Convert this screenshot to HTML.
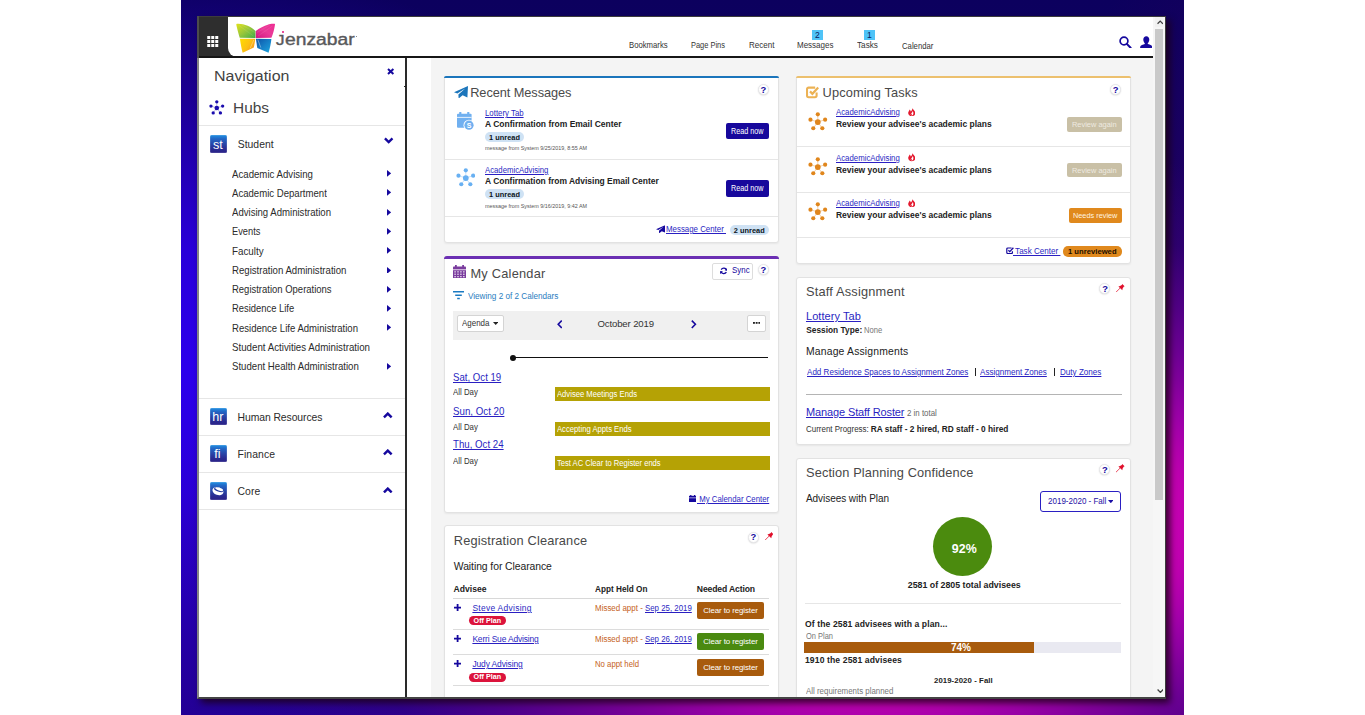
<!DOCTYPE html><html lang="en"><head><meta charset="utf-8"><title>Jenzabar - Home</title><style>
html,body{margin:0;padding:0}
body{width:1365px;height:715px;overflow:hidden;background:#fff;position:relative;font-family:"Liberation Sans",Arial,sans-serif;color:#333}
div,span,a,svg.a,h1,h2,h3,h4,p,ul,li,button,header,nav,aside,main,section{position:absolute;margin:0;padding:0;box-sizing:border-box;display:block;font-weight:400}
button{border:0;background:none;font-family:inherit}
.t{white-space:pre}
a{color:#2a1fc2}
.card{background:#fff;border:1px solid #e2e2e2;border-radius:3px;box-shadow:0 1px 2px rgba(0,0,0,.06)}
.sep{background:#e6e6e6;height:1px}
.q{width:11px;height:11px;border-radius:50%;border:1px solid #e6e6e9;background:#fff;box-shadow:0 .5px 1.5px rgba(0,0,0,.14)}
</style></head><body>
<div class="desk" style="left:181px;top:0px;width:1003px;height:715px;background:radial-gradient(ellipse 425px 242px at 692px 523px, #d000b6 0%, #d000b6 66%, #c000b0 74%, #a000aa 83%, #80009c 93%, #6c0094 101%, rgba(94,0,142,.78) 114%, rgba(70,0,130,.35) 135%, rgba(60,0,120,0) 165%),radial-gradient(ellipse 560px 400px at 0px 370px, rgba(44,0,236,1) 0%, rgba(43,0,226,.92) 30%, rgba(42,0,196,.5) 68%, rgba(42,0,180,0) 100%),linear-gradient(125deg, rgba(70,0,70,0) 62%, rgba(76,0,84,.4) 86%),linear-gradient(180deg, #0c005e 0%, #100066 25%, #1a0078 60%, #220088 100%);">
</div>
<div class="win" style="left:197px;top:16px;width:969px;height:683px;background:#fff;border:1px solid #3c3c3c;border-left:2px solid #858585;border-bottom:2px solid #444;box-shadow:4px 4px 7px 0 rgba(28,0,22,.85);overflow:hidden">
<header style="left:0px;top:0px;width:966px;height:41px;background:#fff">
<div style="left:0px;top:0px;width:42px;height:40px;background:#2e2e2e">
</div>
<div style="left:28.5px;top:0px;width:40px;height:39.5px;background:#fff;border-bottom-left-radius:9px">
</div>
<div style="left:0px;top:39px;width:966px;height:1.7px;background:#161616">
</div>
<svg class="a" style="left:8px;top:18.7px;" width="11.5" height="11" viewBox="0 0 11 11"><rect x="0" y="0" width="3" height="3" fill="#fff"/><rect x="0" y="4" width="3" height="3" fill="#fff"/><rect x="0" y="8" width="3" height="3" fill="#fff"/><rect x="4" y="0" width="3" height="3" fill="#fff"/><rect x="4" y="4" width="3" height="3" fill="#fff"/><rect x="4" y="8" width="3" height="3" fill="#fff"/><rect x="8" y="0" width="3" height="3" fill="#fff"/><rect x="8" y="4" width="3" height="3" fill="#fff"/><rect x="8" y="8" width="3" height="3" fill="#fff"/></svg>
<svg class="a" style="left:37px;top:6.1px;" width="39.8" height="30" viewBox="0 0 39.8 30"><defs><linearGradient id="lg1" x1="0" y1="0" x2="1" y2="1"><stop offset="0" stop-color="#e0e21c"/><stop offset=".5" stop-color="#98c63a"/><stop offset="1" stop-color="#3dac48"/></linearGradient><linearGradient id="lg2" x1="1" y1="0" x2="0" y2="1"><stop offset="0" stop-color="#ee2c92"/><stop offset=".5" stop-color="#e93a98"/><stop offset="1" stop-color="#d21680"/></linearGradient><linearGradient id="lg3" x1="0" y1="0" x2="1" y2=".6"><stop offset="0" stop-color="#ffdc00"/><stop offset=".6" stop-color="#fcc012"/><stop offset="1" stop-color="#f6981e"/></linearGradient><linearGradient id="lg4" x1="0" y1="0" x2="1" y2="1"><stop offset="0" stop-color="#0c52a6"/><stop offset=".5" stop-color="#167ec6"/><stop offset="1" stop-color="#1ca6de"/></linearGradient></defs><path d="M0.9 0.8 C4 0.4 8 1.3 11.7 2.7 C14.5 3.8 17.5 5.8 19.5 8 L19.5 15 L3.7 14.8 C2.6 11 1.2 6 0.4 2.2 C0.2 1.4 0.4 0.9 0.9 0.8Z" fill="url(#lg1)"/><path d="M38.6 0.8 C36 0.5 33.5 1.1 31.8 1.7 C28.5 2.7 23 5 19.8 8 L19.8 15 L35.4 14.8 C36.4 12.4 37.4 9.4 37.9 7.2 C38.4 5 38.9 2.6 39 1.4 C39.1 1 38.9 0.8 38.6 0.8Z" fill="url(#lg2)"/><path d="M3.9 15.7 L19.3 15.7 C19 18 18.4 21.5 17.8 24.6 L6.7 29.8 C5.8 27 4.6 20.5 3.9 15.7Z" fill="url(#lg3)"/><path d="M20 15.7 L35.4 16 C35 19.5 34 25 32.6 29.8 L21.3 25 C20.8 22 20.3 18.5 20 15.7Z" fill="url(#lg4)"/><path d="M21.8 16.6 L24.8 24.6" stroke="rgba(255,255,255,.55)" stroke-width=".7" fill="none"/><path d="M17.8 17 L14.2 25.2" stroke="rgba(255,255,255,.45)" stroke-width=".7" fill="none"/><path d="M3 2.5 L17.5 13 M6 2 L19 9.5 M22 13 L36.5 3 M21 9.5 L34 2" stroke="rgba(255,255,255,.16)" stroke-width=".6" fill="none"/></svg>
<span class="t brand" style="left:77.2px;top:12px;font-size:17.2px;line-height:20px;color:#58585a;-webkit-text-stroke:.4px #58585a;transform:scaleX(1.121);transform-origin:0 0"><span style="position:static;display:inline;font-size:15.2px;line-height:0;letter-spacing:.45px">J</span>enzabar</span>
<div style="left:82.8px;top:13.8px;width:2.5px;height:2.5px;background:#e0157a;border-radius:50%">
</div>
<div style="left:156.6px;top:18.6px;width:1px;height:1px;background:#888">
</div>
<nav style="left:401px;top:3px;width:360px;height:36px;">
<span class="t" style="left:28.7px;top:20px;font-size:8.56px;line-height:10px;color:#333;transform:scaleX(0.9029);transform-origin:0 0;">Bookmarks</span>
<span class="t" style="left:91px;top:20px;font-size:8.56px;line-height:10px;color:#333;transform:scaleX(0.8725);transform-origin:0 0;">Page Pins</span>
<span class="t" style="left:149px;top:20px;font-size:8.56px;line-height:10px;color:#333;transform:scaleX(0.9375);transform-origin:0 0;">Recent</span>
<span class="t" style="left:197.3px;top:20px;font-size:8.56px;line-height:10px;color:#333;transform:scaleX(0.9341);transform-origin:0 0;">Messages</span>
<span class="t" style="left:257.3px;top:20px;font-size:8.56px;line-height:10px;color:#333;transform:scaleX(0.9561);transform-origin:0 0;">Tasks</span>
<span class="t" style="left:301.9px;top:21px;font-size:8.56px;line-height:10px;color:#333;transform:scaleX(0.9052);transform-origin:0 0;">Calendar</span>
<div style="left:211.7px;top:9.6px;width:11.3px;height:10.4px;background:#4fc3f7">
<span class="t" style="left:3.4px;top:0.4px;font-size:8.56px;line-height:10px;color:#0a1a5c;">2</span>
</div>
<div style="left:263.5px;top:9.6px;width:11.3px;height:10.4px;background:#4fc3f7">
<span class="t" style="left:3.4px;top:0.4px;font-size:8.56px;line-height:10px;color:#0a1a5c;">1</span>
</div>
</nav>
<svg class="a" style="left:920.3px;top:18.6px;" width="12.4" height="12.6" viewBox="0 0 12.4 12.6"><circle cx="5" cy="5" r="3.9" fill="none" stroke="#15089e" stroke-width="1.7"/><path d="M7.8 7.9 L11.6 11.8" stroke="#15089e" stroke-width="2" stroke-linecap="round"/></svg>
<svg class="a" style="left:940.6px;top:18.6px;" width="12.6" height="12.4" viewBox="0 0 12.6 12.4"><path d="M6.3 0.2c1.8 0 3 1.5 3 3.4 0 1.5-.6 2.9-1.5 3.6v.9c1.6.5 4.4 1.5 4.6 2.6l.1 1.6H.1l.1-1.6c.2-1.1 3-2.1 4.6-2.6v-.9c-.9-.7-1.5-2.1-1.5-3.6 0-1.9 1.2-3.4 3-3.4z" fill="#15089e"/></svg>
</header>
<aside style="left:0px;top:41px;width:208px;height:640px;background:#fff;border-right:2px solid #2a2a2a">
<span class="t" style="left:15.3px;top:9px;font-size:15.2px;line-height:17px;color:#424242;transform:scaleX(1.0506);transform-origin:0 0;">Navigation</span>
<svg class="a" style="left:188.2px;top:10.2px;" width="7.4" height="7" viewBox="0 0 7.4 7"><path d="M1 1 L6.4 6 M6.4 1 L1 6" stroke="#15089e" stroke-width="2"/></svg>
<svg class="a" style="left:10.4px;top:42px;" width="15.6" height="15.6" viewBox="0 0 16 16"><path d="M8.00 8.20 L8.00 1.90" stroke="#1a0cae" stroke-width=".45" opacity=".65"/><path d="M8.00 8.20 L13.99 6.25" stroke="#1a0cae" stroke-width=".45" opacity=".65"/><path d="M8.00 8.20 L11.70 13.30" stroke="#1a0cae" stroke-width=".45" opacity=".65"/><path d="M8.00 8.20 L4.30 13.30" stroke="#1a0cae" stroke-width=".45" opacity=".65"/><path d="M8.00 8.20 L2.01 6.25" stroke="#1a0cae" stroke-width=".45" opacity=".65"/><circle cx="8.00" cy="1.90" r="1.7" fill="#1a0cae"/><circle cx="13.99" cy="6.25" r="1.7" fill="#1a0cae"/><circle cx="11.70" cy="13.30" r="1.7" fill="#1a0cae"/><circle cx="4.30" cy="13.30" r="1.7" fill="#1a0cae"/><circle cx="2.01" cy="6.25" r="1.7" fill="#1a0cae"/><circle cx="8.00" cy="8.20" r="2.35" fill="#1a0cae"/></svg>
<span class="t" style="left:33.6px;top:42px;font-size:14.6px;line-height:16px;color:#444;transform:scaleX(1.0564);transform-origin:0 0;">Hubs</span>
<div class="sep" style="left:0px;top:67px;width:206px;height:1px;">
</div>
<div style="left:205px;top:27.6px;width:2px;height:1.6px;background:#222">
</div>
<div style="left:10.8px;top:77.2px;width:17.6px;height:17.6px;background:linear-gradient(180deg,#2191e2 0%,#2268c6 20%,#2848aa 48%,#2a2a90 80%,#2a2288 100%);border-radius:1.5px;box-shadow:inset 0 0 0 .5px rgba(255,255,255,.25)">
<span class="t" style="left:3.2px;top:2.8px;font-size:12.6px;line-height:14px;color:#fff;">st</span>
</div>
<span class="t" style="left:38.7px;top:81px;font-size:10.4px;line-height:11px;color:#2b2b2b;letter-spacing:0.0246px;">Student</span>
<svg class="a" style="left:185.4px;top:79.4px;" width="9.4" height="6.6" viewBox="0 0 10 7"><path d="M1 1.4 L5 5.4 L9 1.4" fill="none" stroke="#15089e" stroke-width="2.5" stroke-linejoin="miter"/></svg>
<ul style="left:0px;top:106px;width:206px;height:214px;list-style:none">
<li style="left:0px;top:0px;width:206px;height:19.27px;">
<span class="t" style="left:33.4px;top:5px;font-size:10.4px;line-height:11px;color:#2b2b2b;transform:scaleX(0.9287);transform-origin:0 0;">Academic Advising</span>
<svg class="a" style="left:187.8px;top:6.2px;" width="4.2" height="6.8" viewBox="0 0 4.2 6.8"><path d="M0 0 L4.2 3.4 L0 6.8Z" fill="#15089e"/></svg>
</li>
<li style="left:0px;top:19.27px;width:206px;height:19.27px;">
<span class="t" style="left:33.4px;top:4.73px;font-size:10.4px;line-height:11px;color:#2b2b2b;transform:scaleX(0.9222);transform-origin:0 0;">Academic Department</span>
<svg class="a" style="left:187.8px;top:6.2px;" width="4.2" height="6.8" viewBox="0 0 4.2 6.8"><path d="M0 0 L4.2 3.4 L0 6.8Z" fill="#15089e"/></svg>
</li>
<li style="left:0px;top:38.54px;width:206px;height:19.27px;">
<span class="t" style="left:33.4px;top:4.46px;font-size:10.4px;line-height:11px;color:#2b2b2b;transform:scaleX(0.9216);transform-origin:0 0;">Advising Administration</span>
<svg class="a" style="left:187.8px;top:6.2px;" width="4.2" height="6.8" viewBox="0 0 4.2 6.8"><path d="M0 0 L4.2 3.4 L0 6.8Z" fill="#15089e"/></svg>
</li>
<li style="left:0px;top:57.81px;width:206px;height:19.27px;">
<span class="t" style="left:33.4px;top:4.19px;font-size:10.4px;line-height:11px;color:#2b2b2b;transform:scaleX(0.894);transform-origin:0 0;">Events</span>
<svg class="a" style="left:187.8px;top:6.2px;" width="4.2" height="6.8" viewBox="0 0 4.2 6.8"><path d="M0 0 L4.2 3.4 L0 6.8Z" fill="#15089e"/></svg>
</li>
<li style="left:0px;top:77.08px;width:206px;height:19.27px;">
<span class="t" style="left:33.4px;top:4.92px;font-size:10.4px;line-height:11px;color:#2b2b2b;transform:scaleX(0.9433);transform-origin:0 0;">Faculty</span>
<svg class="a" style="left:187.8px;top:6.2px;" width="4.2" height="6.8" viewBox="0 0 4.2 6.8"><path d="M0 0 L4.2 3.4 L0 6.8Z" fill="#15089e"/></svg>
</li>
<li style="left:0px;top:96.35px;width:206px;height:19.27px;">
<span class="t" style="left:33.4px;top:4.65px;font-size:10.4px;line-height:11px;color:#2b2b2b;transform:scaleX(0.9256);transform-origin:0 0;">Registration Administration</span>
<svg class="a" style="left:187.8px;top:6.2px;" width="4.2" height="6.8" viewBox="0 0 4.2 6.8"><path d="M0 0 L4.2 3.4 L0 6.8Z" fill="#15089e"/></svg>
</li>
<li style="left:0px;top:115.62px;width:206px;height:19.27px;">
<span class="t" style="left:33.4px;top:4.38px;font-size:10.4px;line-height:11px;color:#2b2b2b;transform:scaleX(0.9123);transform-origin:0 0;">Registration Operations</span>
<svg class="a" style="left:187.8px;top:6.2px;" width="4.2" height="6.8" viewBox="0 0 4.2 6.8"><path d="M0 0 L4.2 3.4 L0 6.8Z" fill="#15089e"/></svg>
</li>
<li style="left:0px;top:134.89px;width:206px;height:19.27px;">
<span class="t" style="left:33.4px;top:4.11px;font-size:10.4px;line-height:11px;color:#2b2b2b;transform:scaleX(0.9047);transform-origin:0 0;">Residence Life</span>
<svg class="a" style="left:187.8px;top:6.2px;" width="4.2" height="6.8" viewBox="0 0 4.2 6.8"><path d="M0 0 L4.2 3.4 L0 6.8Z" fill="#15089e"/></svg>
</li>
<li style="left:0px;top:154.16px;width:206px;height:19.27px;">
<span class="t" style="left:33.4px;top:4.84px;font-size:10.4px;line-height:11px;color:#2b2b2b;transform:scaleX(0.9204);transform-origin:0 0;">Residence Life Administration</span>
<svg class="a" style="left:187.8px;top:6.2px;" width="4.2" height="6.8" viewBox="0 0 4.2 6.8"><path d="M0 0 L4.2 3.4 L0 6.8Z" fill="#15089e"/></svg>
</li>
<li style="left:0px;top:173.43px;width:206px;height:19.27px;">
<span class="t" style="left:33.4px;top:4.57px;font-size:10.4px;line-height:11px;color:#2b2b2b;transform:scaleX(0.937);transform-origin:0 0;">Student Activities Administration</span>
</li>
<li style="left:0px;top:192.7px;width:206px;height:19.27px;">
<span class="t" style="left:33.4px;top:4.3px;font-size:10.4px;line-height:11px;color:#2b2b2b;transform:scaleX(0.9263);transform-origin:0 0;">Student Health Administration</span>
<svg class="a" style="left:187.8px;top:6.2px;" width="4.2" height="6.8" viewBox="0 0 4.2 6.8"><path d="M0 0 L4.2 3.4 L0 6.8Z" fill="#15089e"/></svg>
</li>
</ul>
<div class="sep" style="left:0px;top:339.5px;width:206px;height:1px;">
</div>
<div style="left:10.6px;top:349.5px;width:17.6px;height:17.6px;background:linear-gradient(180deg,#2191e2 0%,#2268c6 20%,#2848aa 48%,#2a2a90 80%,#2a2288 100%);border-radius:1.5px;box-shadow:inset 0 0 0 .5px rgba(255,255,255,.25)">
<span class="t" style="left:2.7px;top:2.5px;font-size:12.6px;line-height:14px;color:#fff;">hr</span>
</div>
<span class="t" style="left:38.6px;top:354px;font-size:10.4px;line-height:11px;color:#2b2b2b;letter-spacing:-0.0908px;">Human Resources</span>
<svg class="a" style="left:184.2px;top:354.1px;" width="9.6" height="6.8" viewBox="0 0 10 7"><path d="M1 5.6 L5 1.6 L9 5.6" fill="none" stroke="#15089e" stroke-width="2.5" stroke-linejoin="miter"/></svg>
<div class="sep" style="left:0px;top:376.8px;width:206px;height:1px;">
</div>
<div style="left:10.6px;top:386.8px;width:17.6px;height:17.6px;background:linear-gradient(180deg,#2191e2 0%,#2268c6 20%,#2848aa 48%,#2a2a90 80%,#2a2288 100%);border-radius:1.5px;box-shadow:inset 0 0 0 .5px rgba(255,255,255,.25)">
<span class="t" style="left:4.6px;top:2.2px;font-size:12.6px;line-height:14px;color:#fff;">fi</span>
</div>
<span class="t" style="left:38.6px;top:391px;font-size:10.4px;line-height:11px;color:#2b2b2b;letter-spacing:0.0616px;">Finance</span>
<svg class="a" style="left:184.2px;top:391.4px;" width="9.6" height="6.8" viewBox="0 0 10 7"><path d="M1 5.6 L5 1.6 L9 5.6" fill="none" stroke="#15089e" stroke-width="2.5" stroke-linejoin="miter"/></svg>
<div class="sep" style="left:0px;top:414.1px;width:206px;height:1px;">
</div>
<div style="left:10.6px;top:424.1px;width:17.6px;height:17.6px;background:linear-gradient(180deg,#2191e2 0%,#2268c6 20%,#2848aa 48%,#2a2a90 80%,#2a2288 100%);border-radius:1.5px;box-shadow:inset 0 0 0 .5px rgba(255,255,255,.25)">
<svg class="a" style="left:2.7px;top:3.6px;" width="12" height="10" viewBox="0 0 12 10"><g transform="rotate(19 6 5)"><ellipse cx="6" cy="5.2" rx="5.6" ry="3.8" fill="#fff"/><ellipse cx="6.2" cy="3.6" rx="4.7" ry="1.9" fill="#21389c"/><ellipse cx="6.5" cy="2.9" rx="4.1" ry="1.45" fill="#fff"/></g></svg>
</div>
<span class="t" style="left:38.6px;top:428px;font-size:10.4px;line-height:11px;color:#2b2b2b;letter-spacing:0.0172px;">Core</span>
<svg class="a" style="left:184.2px;top:428.7px;" width="9.6" height="6.8" viewBox="0 0 10 7"><path d="M1 5.6 L5 1.6 L9 5.6" fill="none" stroke="#15089e" stroke-width="2.5" stroke-linejoin="miter"/></svg>
<div class="sep" style="left:0px;top:451.4px;width:206px;height:1px;">
</div>
</aside>
<main style="left:208px;top:41px;width:746px;height:640px;background:#fff;overflow:hidden">
<div style="left:24px;top:0px;width:722px;height:640px;background:#f4f4f4">
</div>
<section class="card" style="left:37px;top:18px;width:334.5px;height:167px;">
<div style="left:-1px;top:-1px;width:334.5px;height:2.2px;background:#1b75bb;border-radius:3px 3px 0 0">
</div>
<svg class="a" style="left:8.6px;top:8.8px;" width="14" height="12.6" viewBox="0 0 14 12.6"><path d="M14 0 L13.4 11.4 L8.6 9.2 L4.6 12.6 L4.4 8.6 L11.2 2.6 L3.4 7.6 L0 6.2Z" fill="#1b75bb"/></svg>
<h2 class="t" style="left:25.2px;top:8px;font-size:12.8px;line-height:15px;color:#4a4a4a;letter-spacing:-0.0825px;">Recent Messages</h2>
<div class="q" style="left:312.5px;top:6.9px;width:11px;height:11px;">
<span class="t" style="left:1.9px;top:-0.9px;font-size:9.4px;line-height:11px;font-weight:700;color:#15089e;">?</span>
</div>
<svg class="a" style="left:12.2px;top:34.8px;" width="17.6" height="18.8" viewBox="0 0 17.6 18.8"><rect x="0" y="1.8" width="14.6" height="14" rx="1" fill="#70b0f0"/><rect x="0" y="4.9" width="14.6" height=".9" fill="#fff" opacity=".9"/><rect x="2.2" y="0" width="2.2" height="3" rx=".5" fill="#70b0f0"/><rect x="10.2" y="0" width="2.2" height="3" rx=".5" fill="#70b0f0"/><circle cx="12" cy="13.2" r="5.5" fill="#fff"/><circle cx="12" cy="13.2" r="4.6" fill="#70b0f0"/><text x="12" y="15.7" font-size="7" font-weight="700" text-anchor="middle" fill="#fff" font-family="Liberation Sans, sans-serif">S</text></svg>
<a class="t" href="#" style="left:39.6px;top:31px;font-size:8.35px;line-height:10px;color:#2a1fc2;text-decoration:underline;transform:scaleX(0.9382);transform-origin:0 0;">Lottery Tab</a>
<span class="t" style="left:39.6px;top:42px;font-size:8.8px;line-height:10px;font-weight:700;color:#222;transform:scaleX(0.9659);transform-origin:0 0;">A Confirmation from Email Center</span>
<div style="left:39.8px;top:55px;width:39.2px;height:10px;background:#cfe2f4;border-radius:5px">
<span class="t" style="left:4.2px;top:1px;font-size:7.4px;line-height:9px;font-weight:700;color:#0c1420;letter-spacing:0.0234px;">1 unread</span>
</div>
<span class="t" style="left:39.6px;top:67px;font-size:6.21px;line-height:7px;color:#555;transform:scaleX(0.8701);transform-origin:0 0;">message from System 9/25/2019, 8:55 AM</span>
<button style="left:281.3px;top:45.8px;width:42.5px;height:16.4px;background:#17089c;border-radius:2px">
<span class="t" style="left:5px;top:4.2px;font-size:8.13px;line-height:9px;color:#fff;transform:scaleX(0.8881);transform-origin:0 0;">Read now</span>
</button>
<div class="sep" style="left:0px;top:82px;width:332.5px;height:1px;">
</div>
<svg class="a" style="left:10.6px;top:91.4px;" width="19.6" height="19.6" viewBox="0 0 16 16"><path d="M8.00 8.20 L8.00 1.90" stroke="#68b0f2" stroke-width=".45" opacity=".65"/><path d="M8.00 8.20 L13.99 6.25" stroke="#68b0f2" stroke-width=".45" opacity=".65"/><path d="M8.00 8.20 L11.70 13.30" stroke="#68b0f2" stroke-width=".45" opacity=".65"/><path d="M8.00 8.20 L4.30 13.30" stroke="#68b0f2" stroke-width=".45" opacity=".65"/><path d="M8.00 8.20 L2.01 6.25" stroke="#68b0f2" stroke-width=".45" opacity=".65"/><circle cx="8.00" cy="1.90" r="1.7" fill="#68b0f2"/><circle cx="13.99" cy="6.25" r="1.7" fill="#68b0f2"/><circle cx="11.70" cy="13.30" r="1.7" fill="#68b0f2"/><circle cx="4.30" cy="13.30" r="1.7" fill="#68b0f2"/><circle cx="2.01" cy="6.25" r="1.7" fill="#68b0f2"/><circle cx="8.00" cy="8.20" r="2.35" fill="#68b0f2"/></svg>
<a class="t" href="#" style="left:39.6px;top:88px;font-size:8.35px;line-height:10px;color:#2a1fc2;text-decoration:underline;transform:scaleX(0.93);transform-origin:0 0;">AcademicAdvising</a>
<span class="t" style="left:39.6px;top:99px;font-size:8.8px;line-height:10px;font-weight:700;color:#222;transform:scaleX(0.9619);transform-origin:0 0;">A Confirmation from Advising Email Center</span>
<div style="left:39.8px;top:112.4px;width:39.2px;height:10px;background:#cfe2f4;border-radius:5px">
<span class="t" style="left:4.2px;top:0.6px;font-size:7.4px;line-height:9px;font-weight:700;color:#0c1420;letter-spacing:0.0234px;">1 unread</span>
</div>
<span class="t" style="left:39.6px;top:125px;font-size:6.21px;line-height:7px;color:#555;transform:scaleX(0.8701);transform-origin:0 0;">message from System 9/16/2019, 9:42 AM</span>
<button style="left:281.3px;top:103.4px;width:42.5px;height:16.4px;background:#17089c;border-radius:2px">
<span class="t" style="left:5px;top:3.6px;font-size:8.13px;line-height:9px;color:#fff;transform:scaleX(0.8881);transform-origin:0 0;">Read now</span>
</button>
<div class="sep" style="left:0px;top:139.4px;width:332.5px;height:1px;">
</div>
<svg class="a" style="left:211px;top:147.8px;" width="9.4" height="8.4" viewBox="0 0 14 12.6"><path d="M14 0 L13.4 11.4 L8.6 9.2 L4.6 12.6 L4.4 8.6 L11.2 2.6 L3.4 7.6 L0 6.2Z" fill="#15089e"/></svg>
<a class="t" href="#" style="left:220.8px;top:147px;font-size:8.56px;line-height:10px;color:#2a1fc2;text-decoration:underline;transform:scaleX(0.9217);transform-origin:0 0;">Message Center </a>
<div style="left:284.6px;top:148.4px;width:39.2px;height:10px;background:#cfe2f4;border-radius:5px">
<span class="t" style="left:4.2px;top:0.6px;font-size:7.4px;line-height:9px;font-weight:700;color:#0c1420;letter-spacing:0.0234px;">2 unread</span>
</div>
</section>
<section class="card" style="left:37px;top:198.4px;width:334.5px;height:256.4px;">
<div style="left:-1px;top:-1.4px;width:334.5px;height:2.5px;background:#6b2fb3;border-radius:3px 3px 0 0">
</div>
<svg class="a" style="left:8.3px;top:7.4px;" width="13" height="13.4" viewBox="0 0 13 13.4"><rect x="0" y="1.4" width="13" height="12" rx=".8" fill="#7a3c9e"/><rect x="2" y="0" width="1.8" height="2.6" fill="#7a3c9e"/><rect x="9.2" y="0" width="1.8" height="2.6" fill="#7a3c9e"/><rect x="0" y="4.4" width="13" height=".8" fill="#fff"/><rect x="1.3" y="6.2" width="1.6" height="1.3" fill="#fff" opacity=".75"/><rect x="1.3" y="8.6" width="1.6" height="1.3" fill="#fff" opacity=".75"/><rect x="1.3" y="11.0" width="1.6" height="1.3" fill="#fff" opacity=".75"/><rect x="4.2" y="6.2" width="1.6" height="1.3" fill="#fff" opacity=".75"/><rect x="4.2" y="8.6" width="1.6" height="1.3" fill="#fff" opacity=".75"/><rect x="4.2" y="11.0" width="1.6" height="1.3" fill="#fff" opacity=".75"/><rect x="7.1" y="6.2" width="1.6" height="1.3" fill="#fff" opacity=".75"/><rect x="7.1" y="8.6" width="1.6" height="1.3" fill="#fff" opacity=".75"/><rect x="7.1" y="11.0" width="1.6" height="1.3" fill="#fff" opacity=".75"/><rect x="10.0" y="6.2" width="1.6" height="1.3" fill="#fff" opacity=".75"/><rect x="10.0" y="8.6" width="1.6" height="1.3" fill="#fff" opacity=".75"/><rect x="10.0" y="11.0" width="1.6" height="1.3" fill="#fff" opacity=".75"/></svg>
<h2 class="t" style="left:25.4px;top:8.6px;font-size:12.8px;line-height:15px;color:#484848;letter-spacing:0.2412px;">My Calendar</h2>
<button style="left:267.3px;top:6px;width:40.5px;height:16.8px;background:#fff;border:1px solid #ddd;border-radius:2px">
<svg class="a" style="left:6.3px;top:3px;" width="7.6" height="7.8" viewBox="0 0 7.6 7.8"><path d="M6.6 3.2 A3 3 0 0 0 1.2 2.6 M1 4.6 A3 3 0 0 0 6.4 5.2" fill="none" stroke="#15089e" stroke-width="1.3"/><path d="M7.6 .8 L7.4 3.8 L4.6 3.2Z M0 7 L.2 4 L3 4.6Z" fill="#15089e"/></svg>
<span class="t" style="left:18.9px;top:0.6px;font-size:8.35px;line-height:10px;color:#15089e;transform:scaleX(0.9481);transform-origin:0 0;">Sync</span>
</button>
<div class="q" style="left:312.5px;top:7.1px;width:11px;height:11px;">
<span class="t" style="left:1.9px;top:-1.5px;font-size:9.4px;line-height:11px;font-weight:700;color:#15089e;">?</span>
</div>
<svg class="a" style="left:7.8px;top:34px;" width="11" height="8.4" viewBox="0 0 11 8.4"><path d="M0 .8H11M2.2 4.2H8.8M4.2 7.6H6.8" stroke="#1b7ac2" stroke-width="1.5"/></svg>
<span class="t" style="left:22.6px;top:33.6px;font-size:8.99px;line-height:10px;color:#2a7cc0;transform:scaleX(0.9064);transform-origin:0 0;">Viewing 2 of 2 Calendars</span>
<div style="left:7.8px;top:53.6px;width:317.2px;height:28.8px;background:#f0f0f0">
<button style="left:3.9px;top:3.9px;width:46.9px;height:17.2px;background:#fff;border:1px solid #d4d4d4;border-radius:2px">
<span class="t" style="left:4.7px;top:2.1px;font-size:8.35px;line-height:10px;color:#333;transform:scaleX(0.952);transform-origin:0 0;">Agenda</span>
<svg class="a" style="left:35.3px;top:6.5px;" width="5.4" height="3" viewBox="0 0 5.4 3"><path d="M0 0H5.4L2.7 3Z" fill="#222"/></svg>
</button>
<svg class="a" style="left:103.8px;top:9.4px;" width="5.6" height="8.6" viewBox="0 0 5.6 8.6"><path d="M4.8 .6 L1.2 4.3 L4.8 8" fill="none" stroke="#15089e" stroke-width="1.6"/></svg>
<span class="t" style="left:144.6px;top:7px;font-size:9.6px;line-height:11px;color:#333;letter-spacing:-0.1284px;">October 2019</span>
<svg class="a" style="left:238.2px;top:9.4px;" width="5.6" height="8.6" viewBox="0 0 5.6 8.6"><path d="M.8 .6 L4.4 4.3 L.8 8" fill="none" stroke="#15089e" stroke-width="1.6"/></svg>
<button style="left:294.4px;top:3.9px;width:18.4px;height:17.2px;background:#fff;border:1px solid #d4d4d4;border-radius:2px">
<svg class="a" style="left:4.4px;top:6.5px;" width="7.4" height="1.8" viewBox="0 0 7.4 1.8"><rect x="0" y="0" width="1.9" height="1.8" fill="#222"/><rect x="2.7" y="0" width="1.9" height="1.8" fill="#222"/><rect x="5.4" y="0" width="1.9" height="1.8" fill="#222"/></svg>
</button>
</div>
<div style="left:68px;top:99.8px;width:255px;height:1px;background:#111">
</div>
<div style="left:65px;top:97.2px;width:6.2px;height:6.2px;background:#111;border-radius:50%">
</div>
<a class="t" href="#" style="left:7.6px;top:113.6px;font-size:11px;line-height:12px;color:#2a1fc2;text-decoration:underline;transform:scaleX(0.8759);transform-origin:0 0;">Sat, Oct 19</a>
<span class="t" style="left:7.8px;top:129.6px;font-size:8.35px;line-height:10px;color:#333;transform:scaleX(0.9418);transform-origin:0 0;">All Day</span>
<div style="left:110px;top:129.8px;width:214.8px;height:14.2px;background:#b5a205">
<span class="t" style="left:2.4px;top:2.8px;font-size:8.24px;line-height:9px;color:#fff;transform:scaleX(0.9296);transform-origin:0 0;">Advisee Meetings Ends</span>
</div>
<a class="t" href="#" style="left:7.6px;top:147.6px;font-size:11px;line-height:12px;color:#2a1fc2;text-decoration:underline;transform:scaleX(0.8848);transform-origin:0 0;">Sun, Oct 20</a>
<span class="t" style="left:7.8px;top:164.6px;font-size:8.35px;line-height:10px;color:#333;transform:scaleX(0.9418);transform-origin:0 0;">All Day</span>
<div style="left:110px;top:164.4px;width:214.8px;height:14.2px;background:#b5a205">
<span class="t" style="left:2.4px;top:3.2px;font-size:8.24px;line-height:9px;color:#fff;transform:scaleX(0.9312);transform-origin:0 0;">Accepting Appts Ends</span>
</div>
<a class="t" href="#" style="left:7.6px;top:180.6px;font-size:11px;line-height:12px;color:#2a1fc2;text-decoration:underline;transform:scaleX(0.8802);transform-origin:0 0;">Thu, Oct 24</a>
<span class="t" style="left:7.8px;top:198.6px;font-size:8.35px;line-height:10px;color:#333;transform:scaleX(0.9418);transform-origin:0 0;">All Day</span>
<div style="left:110px;top:198.4px;width:214.8px;height:14.2px;background:#b5a205">
<span class="t" style="left:2.4px;top:3.2px;font-size:8.24px;line-height:9px;color:#fff;transform:scaleX(0.9201);transform-origin:0 0;">Test AC Clear to Register ends</span>
</div>
<svg class="a" style="left:243.8px;top:237.2px;" width="7.4" height="7.4" viewBox="0 0 7.4 7.4"><rect x="0" y=".8" width="7.4" height="6.6" fill="#15089e"/><rect x="0" y="2.6" width="7.4" height=".6" fill="#fff"/><rect x="1.2" y="0" width="1.2" height="1.6" fill="#15089e"/><rect x="5" y="0" width="1.2" height="1.6" fill="#15089e"/></svg>
<a class="t" href="#" style="left:251.6px;top:236.6px;font-size:8.56px;line-height:10px;color:#2a1fc2;text-decoration:underline;transform:scaleX(0.9156);transform-origin:0 0;"> My Calendar Center</a>
</section>
<section class="card" style="left:37px;top:467px;width:334.5px;height:185px;">
<h2 class="t" style="left:8.8px;top:7px;font-size:12.8px;line-height:15px;color:#484848;letter-spacing:0.1467px;">Registration Clearance</h2>
<div class="q" style="left:302.5px;top:5.5px;width:11px;height:11px;">
<span class="t" style="left:1.9px;top:-1.5px;font-size:9.4px;line-height:11px;font-weight:700;color:#15089e;">?</span>
</div>
<svg class="a" style="left:319.6px;top:6.2px;" width="8.6" height="8.2" viewBox="0 0 8.6 8.2"><path d="M.3 7.9 L3.9 4.3" stroke="#e8334a" stroke-width=".9" stroke-linecap="round"/><path d="M6.2 0 L8.6 2.2 L7.7 2.7 L6.6 4.5 L6.3 6.2 L2.4 2.5 L4 2.1 L5.8 1Z" fill="#e0102c"/></svg>
<h3 class="t" style="left:8.8px;top:35px;font-size:10.4px;line-height:11px;color:#222;letter-spacing:-0.0729px;">Waiting for Clearance</h3>
<span class="t" style="left:8.6px;top:58px;font-size:8.6px;line-height:10px;font-weight:700;color:#222;">Advisee</span>
<span class="t" style="left:149.6px;top:58px;font-size:8.6px;line-height:10px;font-weight:700;color:#222;transform:scaleX(0.9544);transform-origin:0 0;">Appt Held On</span>
<span class="t" style="left:251.8px;top:58px;font-size:8.6px;line-height:10px;font-weight:700;color:#222;letter-spacing:-0.1276px;">Needed Action</span>
<div style="left:8px;top:71.6px;width:315.6px;height:1px;background:#d8d8d8">
</div>
<svg class="a" style="left:9.2px;top:78px;" width="7.2" height="7.2" viewBox="0 0 7.2 7.2"><path d="M3.6 0V7.2M0 3.6H7.2" stroke="#15089e" stroke-width="1.8"/></svg>
<a class="t" href="#" style="left:27.4px;top:77px;font-size:8.45px;line-height:10px;color:#2a1fc2;text-decoration:underline;letter-spacing:0.2886px;">Steve Advising</a>
<div style="left:24.2px;top:90.4px;width:37.3px;height:8.8px;background:#dc143c;border-radius:4.4px">
<span class="t" style="left:4.4px;top:-0.4px;font-size:7.2px;line-height:9px;font-weight:700;color:#fff;">Off Plan</span>
</div>
<span class="t" style="left:149.6px;top:77px;font-size:8.35px;line-height:10px;color:#c5621c;transform:scaleX(0.9541);transform-origin:0 0;">Missed appt - </span>
<a class="t" href="#" style="left:199.8px;top:77px;font-size:8.35px;line-height:10px;color:#2a1fc2;text-decoration:underline;transform:scaleX(0.9425);transform-origin:0 0;">Sep 25, 2019</a>
<button style="left:251.9px;top:76.2px;width:67.2px;height:17.1px;background:#a85b0d;border-radius:2px">
<span class="t" style="left:6.3px;top:3.8px;font-size:7.92px;line-height:9px;color:#fff;letter-spacing:-0.0971px;">Clear to register</span>
</button>
<svg class="a" style="left:9.2px;top:109px;" width="7.2" height="7.2" viewBox="0 0 7.2 7.2"><path d="M3.6 0V7.2M0 3.6H7.2" stroke="#15089e" stroke-width="1.8"/></svg>
<a class="t" href="#" style="left:27.4px;top:108px;font-size:8.45px;line-height:10px;color:#2a1fc2;text-decoration:underline;letter-spacing:-0.153px;">Kerri Sue Advising</a>
<span class="t" style="left:149.6px;top:108px;font-size:8.35px;line-height:10px;color:#c5621c;transform:scaleX(0.9541);transform-origin:0 0;">Missed appt - </span>
<a class="t" href="#" style="left:199.8px;top:108px;font-size:8.35px;line-height:10px;color:#2a1fc2;text-decoration:underline;transform:scaleX(0.9425);transform-origin:0 0;">Sep 26, 2019</a>
<button style="left:251.9px;top:107px;width:67.2px;height:17.1px;background:#4a8a10;border-radius:2px">
<span class="t" style="left:6.3px;top:4px;font-size:7.92px;line-height:9px;color:#fff;letter-spacing:-0.0971px;">Clear to register</span>
</button>
<svg class="a" style="left:9.2px;top:134.2px;" width="7.2" height="7.2" viewBox="0 0 7.2 7.2"><path d="M3.6 0V7.2M0 3.6H7.2" stroke="#15089e" stroke-width="1.8"/></svg>
<a class="t" href="#" style="left:27.4px;top:133px;font-size:8.45px;line-height:10px;color:#2a1fc2;text-decoration:underline;letter-spacing:-0.1072px;">Judy Advising</a>
<div style="left:24.2px;top:146.8px;width:37.3px;height:8.8px;background:#dc143c;border-radius:4.4px">
<span class="t" style="left:4.4px;top:-0.8px;font-size:7.2px;line-height:9px;font-weight:700;color:#fff;">Off Plan</span>
</div>
<span class="t" style="left:149.6px;top:133px;font-size:8.35px;line-height:10px;color:#c5621c;transform:scaleX(0.9297);transform-origin:0 0;">No appt held</span>
<button style="left:251.9px;top:132.6px;width:67.2px;height:17.1px;background:#a85b0d;border-radius:2px">
<span class="t" style="left:6.3px;top:4.4px;font-size:7.92px;line-height:9px;color:#fff;letter-spacing:-0.0971px;">Clear to register</span>
</button>
<div style="left:8px;top:103px;width:315.6px;height:1px;background:#dcdcdc">
</div>
<div style="left:8px;top:128.2px;width:315.6px;height:1px;background:#dcdcdc">
</div>
<div style="left:8px;top:159.2px;width:315.6px;height:1px;background:#dcdcdc">
</div>
</section>
<section class="card" style="left:389.4px;top:17.6px;width:334.2px;height:188.8px;">
<div style="left:-1px;top:-1px;width:334.2px;height:2.2px;background:#ecc06e;border-radius:3px 3px 0 0">
</div>
<svg class="a" style="left:8.4px;top:9.8px;" width="13" height="12.2" viewBox="0 0 13 12.2"><path d="M9.2 1.6H2.6A1.6 1.6 0 0 0 1 3.2V9.6A1.6 1.6 0 0 0 2.6 11.2H9A1.6 1.6 0 0 0 10.6 9.6V6.6" fill="none" stroke="#ecb254" stroke-width="2.1"/><path d="M4 5.4 L6.4 7.8 L12.2 1.4" fill="none" stroke="#ecb254" stroke-width="2.2"/></svg>
<h2 class="t" style="left:25.2px;top:8.4px;font-size:12.8px;line-height:15px;color:#484848;letter-spacing:0.1103px;">Upcoming Tasks</h2>
<div class="q" style="left:312.4px;top:7.3px;width:11px;height:11px;">
<span class="t" style="left:1.9px;top:-0.9px;font-size:9.4px;line-height:11px;font-weight:700;color:#15089e;">?</span>
</div>
<svg class="a" style="left:10.6px;top:35px;" width="19.6" height="19.6" viewBox="0 0 16 16"><path d="M8.00 8.20 L8.00 1.90" stroke="#e0861c" stroke-width=".45" opacity=".65"/><path d="M8.00 8.20 L13.99 6.25" stroke="#e0861c" stroke-width=".45" opacity=".65"/><path d="M8.00 8.20 L11.70 13.30" stroke="#e0861c" stroke-width=".45" opacity=".65"/><path d="M8.00 8.20 L4.30 13.30" stroke="#e0861c" stroke-width=".45" opacity=".65"/><path d="M8.00 8.20 L2.01 6.25" stroke="#e0861c" stroke-width=".45" opacity=".65"/><circle cx="8.00" cy="1.90" r="1.7" fill="#e0861c"/><circle cx="13.99" cy="6.25" r="1.7" fill="#e0861c"/><circle cx="11.70" cy="13.30" r="1.7" fill="#e0861c"/><circle cx="4.30" cy="13.30" r="1.7" fill="#e0861c"/><circle cx="2.01" cy="6.25" r="1.7" fill="#e0861c"/><circle cx="8.00" cy="8.20" r="2.35" fill="#e0861c"/></svg>
<a class="t" href="#" style="left:39px;top:30.4px;font-size:8.35px;line-height:10px;color:#2a1fc2;text-decoration:underline;transform:scaleX(0.9359);transform-origin:0 0;">AcademicAdvising</a>
<svg class="a" style="left:110.3px;top:31.4px;" width="7.5" height="8.3" viewBox="0 0 7.5 8.3"><path d="M4.3 0 C4.9 1.5 7.3 2.9 7.3 5.3 C7.3 7 5.8 8.2 3.8 8.2 C1.7 8.2 .2 7 .2 5.1 C.2 3.6 1.3 2.6 1.7 1.5 C2.4 2.1 2.7 2.8 2.7 3.6 C3.6 2.8 4.5 1.5 4.3 0Z" fill="#e4192e"/><path d="M4.7 2.8 C5 4 5.7 4.8 5.3 6 C5 7 4.1 7.6 3.3 7.7 C3.9 7 4.1 6.3 3.8 5.6 C3.4 6.1 2.9 6.5 2.2 6.5 C3.3 5.6 4.5 4.4 4.7 2.8Z" fill="#fff"/></svg>
<span class="t" style="left:39px;top:42.4px;font-size:8.8px;line-height:10px;font-weight:700;color:#222;transform:scaleX(0.9635);transform-origin:0 0;">Review your advisee&#x27;s academic plans</span>
<button style="left:269.8px;top:40.6px;width:54.4px;height:14.6px;background:#c9c0a6;border-radius:2px">
<span class="t" style="left:4.9px;top:2.8px;font-size:7.92px;line-height:9px;color:#eeeae0;transform:scaleX(0.9396);transform-origin:0 0;">Review again</span>
</button>
<div class="sep" style="left:0px;top:69.8px;width:332.2px;height:1px;">
</div>
<svg class="a" style="left:10.6px;top:80.45px;" width="19.6" height="19.6" viewBox="0 0 16 16"><path d="M8.00 8.20 L8.00 1.90" stroke="#e0861c" stroke-width=".45" opacity=".65"/><path d="M8.00 8.20 L13.99 6.25" stroke="#e0861c" stroke-width=".45" opacity=".65"/><path d="M8.00 8.20 L11.70 13.30" stroke="#e0861c" stroke-width=".45" opacity=".65"/><path d="M8.00 8.20 L4.30 13.30" stroke="#e0861c" stroke-width=".45" opacity=".65"/><path d="M8.00 8.20 L2.01 6.25" stroke="#e0861c" stroke-width=".45" opacity=".65"/><circle cx="8.00" cy="1.90" r="1.7" fill="#e0861c"/><circle cx="13.99" cy="6.25" r="1.7" fill="#e0861c"/><circle cx="11.70" cy="13.30" r="1.7" fill="#e0861c"/><circle cx="4.30" cy="13.30" r="1.7" fill="#e0861c"/><circle cx="2.01" cy="6.25" r="1.7" fill="#e0861c"/><circle cx="8.00" cy="8.20" r="2.35" fill="#e0861c"/></svg>
<a class="t" href="#" style="left:39px;top:76.4px;font-size:8.35px;line-height:10px;color:#2a1fc2;text-decoration:underline;transform:scaleX(0.9359);transform-origin:0 0;">AcademicAdvising</a>
<svg class="a" style="left:110.3px;top:76.85px;" width="7.5" height="8.3" viewBox="0 0 7.5 8.3"><path d="M4.3 0 C4.9 1.5 7.3 2.9 7.3 5.3 C7.3 7 5.8 8.2 3.8 8.2 C1.7 8.2 .2 7 .2 5.1 C.2 3.6 1.3 2.6 1.7 1.5 C2.4 2.1 2.7 2.8 2.7 3.6 C3.6 2.8 4.5 1.5 4.3 0Z" fill="#e4192e"/><path d="M4.7 2.8 C5 4 5.7 4.8 5.3 6 C5 7 4.1 7.6 3.3 7.7 C3.9 7 4.1 6.3 3.8 5.6 C3.4 6.1 2.9 6.5 2.2 6.5 C3.3 5.6 4.5 4.4 4.7 2.8Z" fill="#fff"/></svg>
<span class="t" style="left:39px;top:88.4px;font-size:8.8px;line-height:10px;font-weight:700;color:#222;transform:scaleX(0.9635);transform-origin:0 0;">Review your advisee&#x27;s academic plans</span>
<button style="left:269.8px;top:86.05px;width:54.4px;height:14.6px;background:#c9c0a6;border-radius:2px">
<span class="t" style="left:4.9px;top:3.35px;font-size:7.92px;line-height:9px;color:#eeeae0;transform:scaleX(0.9396);transform-origin:0 0;">Review again</span>
</button>
<div class="sep" style="left:0px;top:115.25px;width:332.2px;height:1px;">
</div>
<svg class="a" style="left:10.6px;top:125.9px;" width="19.6" height="19.6" viewBox="0 0 16 16"><path d="M8.00 8.20 L8.00 1.90" stroke="#e0861c" stroke-width=".45" opacity=".65"/><path d="M8.00 8.20 L13.99 6.25" stroke="#e0861c" stroke-width=".45" opacity=".65"/><path d="M8.00 8.20 L11.70 13.30" stroke="#e0861c" stroke-width=".45" opacity=".65"/><path d="M8.00 8.20 L4.30 13.30" stroke="#e0861c" stroke-width=".45" opacity=".65"/><path d="M8.00 8.20 L2.01 6.25" stroke="#e0861c" stroke-width=".45" opacity=".65"/><circle cx="8.00" cy="1.90" r="1.7" fill="#e0861c"/><circle cx="13.99" cy="6.25" r="1.7" fill="#e0861c"/><circle cx="11.70" cy="13.30" r="1.7" fill="#e0861c"/><circle cx="4.30" cy="13.30" r="1.7" fill="#e0861c"/><circle cx="2.01" cy="6.25" r="1.7" fill="#e0861c"/><circle cx="8.00" cy="8.20" r="2.35" fill="#e0861c"/></svg>
<a class="t" href="#" style="left:39px;top:121.4px;font-size:8.35px;line-height:10px;color:#2a1fc2;text-decoration:underline;transform:scaleX(0.9359);transform-origin:0 0;">AcademicAdvising</a>
<svg class="a" style="left:110.3px;top:122.3px;" width="7.5" height="8.3" viewBox="0 0 7.5 8.3"><path d="M4.3 0 C4.9 1.5 7.3 2.9 7.3 5.3 C7.3 7 5.8 8.2 3.8 8.2 C1.7 8.2 .2 7 .2 5.1 C.2 3.6 1.3 2.6 1.7 1.5 C2.4 2.1 2.7 2.8 2.7 3.6 C3.6 2.8 4.5 1.5 4.3 0Z" fill="#e4192e"/><path d="M4.7 2.8 C5 4 5.7 4.8 5.3 6 C5 7 4.1 7.6 3.3 7.7 C3.9 7 4.1 6.3 3.8 5.6 C3.4 6.1 2.9 6.5 2.2 6.5 C3.3 5.6 4.5 4.4 4.7 2.8Z" fill="#fff"/></svg>
<span class="t" style="left:39px;top:133.4px;font-size:8.8px;line-height:10px;font-weight:700;color:#222;transform:scaleX(0.9635);transform-origin:0 0;">Review your advisee&#x27;s academic plans</span>
<button style="left:271.2px;top:131.5px;width:53px;height:14.6px;background:#e0891d;border-radius:2px">
<span class="t" style="left:4.3px;top:2.9px;font-size:7.92px;line-height:9px;color:#fff4e0;transform:scaleX(0.9268);transform-origin:0 0;">Needs review</span>
</button>
<div class="sep" style="left:0px;top:160.7px;width:332.2px;height:1px;">
</div>
<svg class="a" style="left:208.2px;top:170.2px;" width="8" height="7.4" viewBox="0 0 8 7.4"><path d="M5.6 1H1.8A1 1 0 0 0 .8 2V5.6A1 1 0 0 0 1.8 6.6H5.4A1 1 0 0 0 6.4 5.6V4.2" fill="none" stroke="#15089e" stroke-width="1.2"/><path d="M2.4 3.2 L3.8 4.6 L7.4 .8" fill="none" stroke="#15089e" stroke-width="1.3"/></svg>
<a class="t" href="#" style="left:216px;top:169.4px;font-size:8.56px;line-height:10px;color:#2a1fc2;text-decoration:underline;transform:scaleX(0.9442);transform-origin:0 0;"> Task Center </a>
<div style="left:265.5px;top:169.8px;width:58.7px;height:10.2px;background:#e0891d;border-radius:5.1px">
<span class="t" style="left:5px;top:0.6px;font-size:7.6px;line-height:9px;font-weight:700;color:#1a0e00;letter-spacing:0.0479px;">1 unreviewed</span>
</div>
</section>
<section class="card" style="left:389.4px;top:219px;width:334.2px;height:167.6px;">
<h2 class="t" style="left:8.6px;top:6px;font-size:12.8px;line-height:15px;color:#484848;letter-spacing:0.1877px;">Staff Assignment</h2>
<div class="q" style="left:302px;top:4.9px;width:11px;height:11px;">
<span class="t" style="left:1.9px;top:-0.9px;font-size:9.4px;line-height:11px;font-weight:700;color:#15089e;">?</span>
</div>
<svg class="a" style="left:318.9px;top:5.6px;" width="8.6" height="8.2" viewBox="0 0 8.6 8.2"><path d="M.3 7.9 L3.9 4.3" stroke="#e8334a" stroke-width=".9" stroke-linecap="round"/><path d="M6.2 0 L8.6 2.2 L7.7 2.7 L6.6 4.5 L6.3 6.2 L2.4 2.5 L4 2.1 L5.8 1Z" fill="#e0102c"/></svg>
<a class="t" href="#" style="left:8.6px;top:32px;font-size:11px;line-height:12px;color:#2a1fc2;text-decoration:underline;letter-spacing:0.0696px;">Lottery Tab</a>
<span class="t" style="left:8.8px;top:47px;font-size:8.3px;line-height:10px;font-weight:700;color:#222;letter-spacing:0.0276px;">Session Type:</span>
<span class="t" style="left:66.8px;top:47px;font-size:8.35px;line-height:10px;color:#777;transform:scaleX(0.9121);transform-origin:0 0;">None</span>
<h3 class="t" style="left:8.6px;top:68px;font-size:10.4px;line-height:11px;color:#222;letter-spacing:0.1689px;">Manage Assignments</h3>
<a class="t" href="#" style="left:9.8px;top:89px;font-size:8.56px;line-height:10px;color:#2a1fc2;text-decoration:underline;transform:scaleX(0.9436);transform-origin:0 0;">Add Residence Spaces to Assignment Zones</a>
<div style="left:177.8px;top:89.6px;width:1px;height:8.4px;background:#222">
</div>
<a class="t" href="#" style="left:183px;top:89px;font-size:8.56px;line-height:10px;color:#2a1fc2;text-decoration:underline;transform:scaleX(0.9435);transform-origin:0 0;">Assignment Zones</a>
<div style="left:256.8px;top:89.6px;width:1px;height:8.4px;background:#222">
</div>
<a class="t" href="#" style="left:262.2px;top:89px;font-size:8.56px;line-height:10px;color:#2a1fc2;text-decoration:underline;transform:scaleX(0.9473);transform-origin:0 0;">Duty Zones</a>
<div style="left:8.6px;top:116px;width:315.6px;height:1px;background:#b4b4b4">
</div>
<a class="t" href="#" style="left:8.6px;top:128px;font-size:11px;line-height:12px;color:#2a1fc2;text-decoration:underline;letter-spacing:-0.1204px;">Manage Staff Roster</a>
<span class="t" style="left:109.6px;top:130px;font-size:8.35px;line-height:10px;color:#666;transform:scaleX(0.9446);transform-origin:0 0;">2 in total</span>
<span class="t" style="left:8.4px;top:146px;font-size:8.45px;line-height:10px;color:#333;transform:scaleX(0.9429);transform-origin:0 0;">Current Progress: </span>
<span class="t" style="left:73.4px;top:146px;font-size:8.3px;line-height:10px;font-weight:700;color:#222;letter-spacing:0.0137px;">RA staff - 2 hired, RD staff - 0 hired</span>
</section>
<section class="card" style="left:389.4px;top:399.6px;width:334.2px;height:260px;">
<h2 class="t" style="left:8.6px;top:6.4px;font-size:12.8px;line-height:15px;color:#484848;letter-spacing:0.1206px;">Section Planning Confidence</h2>
<div class="q" style="left:301.8px;top:5.1px;width:11px;height:11px;">
<span class="t" style="left:1.9px;top:-0.7px;font-size:9.4px;line-height:11px;font-weight:700;color:#15089e;">?</span>
</div>
<svg class="a" style="left:318.6px;top:5.8px;" width="8.6" height="8.2" viewBox="0 0 8.6 8.2"><path d="M.3 7.9 L3.9 4.3" stroke="#e8334a" stroke-width=".9" stroke-linecap="round"/><path d="M6.2 0 L8.6 2.2 L7.7 2.7 L6.6 4.5 L6.3 6.2 L2.4 2.5 L4 2.1 L5.8 1Z" fill="#e0102c"/></svg>
<h3 class="t" style="left:8.6px;top:34.4px;font-size:10px;line-height:11px;color:#222;letter-spacing:-0.0521px;">Advisees with Plan</h3>
<button style="left:242.6px;top:32.7px;width:81.5px;height:20.6px;background:#fff;border:1px solid #2a1fc2;border-radius:3px">
<span class="t" style="left:7px;top:3.7px;font-size:8.99px;line-height:10px;color:#1c0fa6;transform:scaleX(0.8925);transform-origin:0 0;">2019-2020 - Fall</span>
<svg class="a" style="left:66.8px;top:7.3px;" width="5.6" height="3.2" viewBox="0 0 5.6 3.2"><path d="M0 0H5.6L2.8 3.2Z" fill="#1c0fa6"/></svg>
</button>
<div style="left:135.9px;top:58.9px;width:58.8px;height:58.8px;background:#4b8b0e;border-radius:50%">
<span class="t" style="left:18.5px;top:24.5px;font-size:12.4px;line-height:14px;font-weight:700;color:#fff;letter-spacing:0.0625px;">92%</span>
</div>
<span class="t" style="left:110.4px;top:121.4px;font-size:8.8px;line-height:10px;font-weight:700;color:#222;">2581 of 2805 total advisees</span>
<div class="sep" style="left:7.6px;top:144.4px;width:316.5px;height:1px;">
</div>
<span class="t" style="left:7.6px;top:160.4px;font-size:8.6px;line-height:10px;font-weight:700;color:#222;letter-spacing:0.0971px;">Of the 2581 advisees with a plan...</span>
<span class="t" style="left:8.2px;top:172.4px;font-size:8.35px;line-height:10px;color:#777;transform:scaleX(0.8953);transform-origin:0 0;">On Plan</span>
<div style="left:6.6px;top:183px;width:317.5px;height:11.2px;background:#e9e9f1">
<div style="left:0px;top:0px;width:229.7px;height:11.2px;background:#a85b0d">
<span class="t" style="left:147px;top:0.4px;font-size:10px;line-height:11px;font-weight:700;color:#fff;letter-spacing:-0.0052px;">74%</span>
</div>
</div>
<span class="t" style="left:7.6px;top:196.4px;font-size:8.6px;line-height:10px;font-weight:700;color:#222;letter-spacing:0.1087px;">1910 the 2581 advisees</span>
<span class="t" style="left:136.6px;top:217.4px;font-size:7.8px;line-height:9px;font-weight:700;color:#222;letter-spacing:0.0715px;">2019-2020 - Fall</span>
<span class="t" style="left:8.2px;top:227.4px;font-size:8.45px;line-height:10px;color:#777;transform:scaleX(0.9363);transform-origin:0 0;">All requirements planned</span>
</section>
</main>
<div style="left:954px;top:0px;width:12px;height:681px;background:#f6f6f6">
<div style="left:2px;top:12px;width:8px;height:470.5px;background:#c9c9c9">
</div>
<div style="left:2px;top:0px;width:8px;height:10px;background:#f1f1f1">
</div>
<svg class="a" style="left:4px;top:3.4px;" width="6.4" height="4.4" viewBox="0 0 6.8 4.4"><path d="M.6 3.9 L3.4 1 L6.2 3.9" fill="none" stroke="#404040" stroke-width="1.3"/></svg>
<svg class="a" style="left:3.6px;top:672px;" width="6.8" height="4.4" viewBox="0 0 6.8 4.4"><path d="M.6 .5 L3.4 3.4 L6.2 .5" fill="none" stroke="#404040" stroke-width="1.3"/></svg>
</div>
</div>
<div style="left:197px;top:16px;width:2px;height:42px;background:#4c4c4c">
</div>
</body></html>
